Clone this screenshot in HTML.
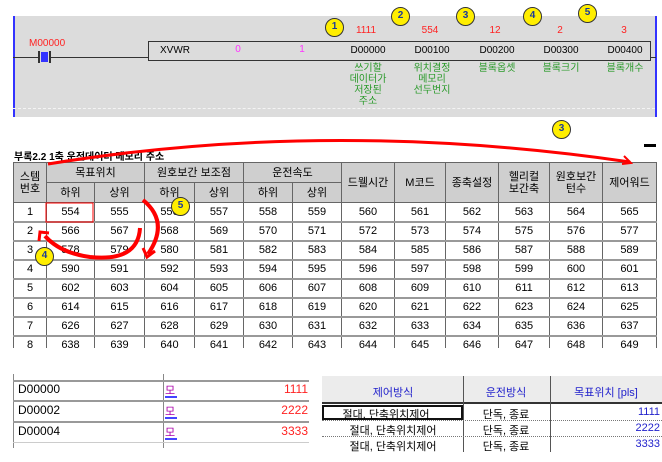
<!DOCTYPE html>
<html><head><meta charset="utf-8"><style>
*{margin:0;padding:0;box-sizing:border-box}
body{width:662px;height:462px;background:#fff;position:relative;overflow:hidden;font-family:"Liberation Sans","Noto Sans CJK KR",sans-serif}
.a{position:absolute;white-space:nowrap}
.c{transform:translateX(-50%);text-align:center}
.ly{font-size:10px;color:#000}
.red{color:#f22}
.grn{color:#2a9a2a;font-size:10px;line-height:11px}
.bub{position:absolute;width:19px;height:19px;border-radius:50%;background:#ffee00;border:1.5px solid #333;font:bold 10px "Liberation Sans",sans-serif;color:#1a3a9a;text-align:center;line-height:16px}
table.t{position:absolute;left:13px;top:162px;border-collapse:collapse;table-layout:fixed;font-size:11px}
table.t td{border:1px solid #666;text-align:center;height:19px;padding:0;border-bottom:2px solid #999}
table.t tr.h td{background:#cfcfcf;border:1px solid #666;height:20px;font-size:11px;line-height:12px}
</style></head><body>
<div class="a" style="left:13px;top:16px;width:644px;height:101px;background:#dcdcdc;border-left:2px solid #33f;border-right:2px solid #33f"></div>
<div class="a" style="left:13px;top:108px;width:642px;border-top:1px dashed #f4f4f4"></div>
<div class="a" style="left:13px;top:57px;width:135px;border-top:1px solid #333"></div>
<div class="a" style="left:651px;top:57px;width:5px;border-top:1px solid #333"></div>
<div class="a" style="left:38px;top:51px;width:13px;height:12px;border-left:2px solid #333;border-right:2px solid #333;background:#dcdcdc"></div>
<div class="a" style="left:41px;top:52px;width:7px;height:10px;background:#33f"></div>
<div class="a red" style="left:29px;top:38px;font-size:10px">M00000</div>
<div class="a" style="left:148px;top:41px;width:503px;height:20px;border:1px solid #333;background:#dcdcdc"></div>
<div class="a ly c" style="left:175px;top:45px">XVWR</div>
<div class="a c" style="left:238px;top:44px;color:#f3f;font-size:10px">0</div>
<div class="a c" style="left:302px;top:44px;color:#f3f;font-size:10px">1</div>
<div class="a ly c" style="left:368px;top:45px">D00000</div>
<div class="a ly c" style="left:432px;top:45px">D00100</div>
<div class="a ly c" style="left:497px;top:45px">D00200</div>
<div class="a ly c" style="left:561px;top:45px">D00300</div>
<div class="a ly c" style="left:625px;top:45px">D00400</div>
<div class="a red c" style="left:366px;top:25px;font-size:10px">1111</div>
<div class="a red c" style="left:430px;top:25px;font-size:10px">554</div>
<div class="a red c" style="left:495px;top:25px;font-size:10px">12</div>
<div class="a red c" style="left:560px;top:25px;font-size:10px">2</div>
<div class="a red c" style="left:624px;top:25px;font-size:10px">3</div>
<div class="a grn c" style="left:368px;top:63px">쓰기할<br>데이터가<br>저장된<br>주소</div>
<div class="a grn c" style="left:432px;top:63px">위치결정<br>메모리<br>선두번지</div>
<div class="a grn c" style="left:497px;top:63px">블록옵셋</div>
<div class="a grn c" style="left:561px;top:63px">블록크기</div>
<div class="a grn c" style="left:625px;top:63px">블록개수</div>
<div class="bub" style="left:325px;top:18px">1</div>
<div class="bub" style="left:391px;top:7px">2</div>
<div class="bub" style="left:456px;top:7px">3</div>
<div class="bub" style="left:523px;top:7px">4</div>
<div class="bub" style="left:578px;top:4px">5</div>

<div class="a" style="left:14px;top:148px;font-size:10px;font-weight:bold">부록2.2 1축 운전데이터 메모리 주소</div>
<div class="a" style="left:644px;top:144px;width:12px;height:3px;background:#000"></div>

<table class="t">
<colgroup><col style="width:33px"><col style="width:48px"><col style="width:50px"><col style="width:50px"><col style="width:49px"><col style="width:49px"><col style="width:49px"><col style="width:53px"><col style="width:51px"><col style="width:53px"><col style="width:51px"><col style="width:53px"><col style="width:54px"></colgroup>
<tr class="h"><td rowspan="2">스템<br>번호</td><td colspan="2">목표위치</td><td colspan="2">원호보간 보조점</td><td colspan="2">운전속도</td><td rowspan="2">드웰시간</td><td rowspan="2">M코드</td><td rowspan="2">종축설정</td><td rowspan="2">헬리컬<br>보간축</td><td rowspan="2">원호보간<br>턴수</td><td rowspan="2">제어워드</td></tr>
<tr class="h"><td>하위</td><td>상위</td><td>하위</td><td>상위</td><td>하위</td><td>상위</td></tr>
<tr><td>1</td><td>554</td><td>555</td><td>556</td><td>557</td><td>558</td><td>559</td><td>560</td><td>561</td><td>562</td><td>563</td><td>564</td><td>565</td></tr>
<tr><td>2</td><td>566</td><td>567</td><td>568</td><td>569</td><td>570</td><td>571</td><td>572</td><td>573</td><td>574</td><td>575</td><td>576</td><td>577</td></tr>
<tr><td>3</td><td>578</td><td>579</td><td>580</td><td>581</td><td>582</td><td>583</td><td>584</td><td>585</td><td>586</td><td>587</td><td>588</td><td>589</td></tr>
<tr><td>4</td><td>590</td><td>591</td><td>592</td><td>593</td><td>594</td><td>595</td><td>596</td><td>597</td><td>598</td><td>599</td><td>600</td><td>601</td></tr>
<tr><td>5</td><td>602</td><td>603</td><td>604</td><td>605</td><td>606</td><td>607</td><td>608</td><td>609</td><td>610</td><td>611</td><td>612</td><td>613</td></tr>
<tr><td>6</td><td>614</td><td>615</td><td>616</td><td>617</td><td>618</td><td>619</td><td>620</td><td>621</td><td>622</td><td>623</td><td>624</td><td>625</td></tr>
<tr><td>7</td><td>626</td><td>627</td><td>628</td><td>629</td><td>630</td><td>631</td><td>632</td><td>633</td><td>634</td><td>635</td><td>636</td><td>637</td></tr>
<tr><td>8</td><td>638</td><td>639</td><td>640</td><td>641</td><td>642</td><td>643</td><td>644</td><td>645</td><td>646</td><td>647</td><td>648</td><td>649</td></tr>
</table>
<div class="a" style="left:0;top:348px;width:662px;height:114px;background:#fff"></div>

<svg class="a" style="left:0;top:0" width="662" height="462">
<path d="M48 164 Q330 118 630 162" stroke="#f00" stroke-width="3" fill="none"/>
<path d="M624 156 L631 163 L622 164" stroke="#f00" stroke-width="2" fill="none"/>
<rect x="46" y="203" width="47" height="19" fill="none" stroke="#f00" stroke-width="1"/>
<path d="M143 200 Q170 222 148 254" stroke="#f00" stroke-width="4" fill="none"/>
<path d="M143 248 L147 257 L155 251" stroke="#f00" stroke-width="3" fill="none"/>
<path d="M140 228 Q138 262 90 257 Q60 253 45 236" stroke="#f00" stroke-width="4" fill="none"/>
<path d="M39 241 L40 232 L49 233" stroke="#f00" stroke-width="3" fill="none"/>
</svg>
<div class="bub" style="left:552px;top:120px">3</div>
<div class="bub" style="left:171px;top:197px">5</div>
<div class="bub" style="left:35px;top:247px">4</div>

<div class="a" style="left:13px;top:374px;width:296px;height:74px;border-left:1px solid #888"></div>
<div class="a" style="left:163px;top:374px;height:74px;border-left:1px solid #888"></div>
<div class="a" style="left:13px;top:380px;width:296px;border-top:2px solid #999"></div>
<div class="a" style="left:13px;top:400px;width:296px;border-top:2px solid #999"></div>
<div class="a" style="left:13px;top:421px;width:296px;border-top:2px solid #999"></div>
<div class="a" style="left:13px;top:442px;width:296px;border-top:1px solid #ccc"></div>
<div class="a" style="left:18px;top:382px;font-size:12px">D00000</div>
<div class="a" style="left:18px;top:403px;font-size:12px">D00002</div>
<div class="a" style="left:18px;top:424px;font-size:12px">D00004</div>
<div class="a" style="left:165px;top:382px;width:12px;height:16px;border-bottom:2px solid #44f;color:#a0a;font-size:11px">모</div>
<div class="a" style="left:165px;top:403px;width:12px;height:16px;border-bottom:2px solid #44f;color:#a0a;font-size:11px">모</div>
<div class="a" style="left:165px;top:424px;width:12px;height:16px;border-bottom:2px solid #44f;color:#a0a;font-size:11px">모</div>
<div class="a red" style="right:354px;top:382px;font-size:12px">1111</div>
<div class="a red" style="right:354px;top:403px;font-size:12px">2222</div>
<div class="a red" style="right:354px;top:424px;font-size:12px">3333</div>

<div class="a" style="left:322px;top:376px;width:340px;height:28px;background:#ececec;border-bottom:2px solid #333"></div>
<div class="a" style="left:463px;top:376px;height:76px;border-left:1px solid #555"></div>
<div class="a" style="left:550px;top:376px;height:76px;border-left:1px solid #555"></div>
<div class="a c" style="left:393px;top:384px;color:#22c;font-size:11px">제어방식</div>
<div class="a c" style="left:506px;top:384px;color:#22c;font-size:11px">운전방식</div>
<div class="a c" style="left:606px;top:384px;color:#22c;font-size:11px">목표위치 [pls]</div>
<div class="a" style="left:322px;top:405px;width:141px;height:15px;border:2px solid #111"></div>
<div class="a" style="left:322px;top:420px;width:340px;border-top:1px dotted #777"></div>
<div class="a" style="left:322px;top:436px;width:340px;border-top:1px dotted #777"></div>
<div class="a c" style="left:386px;top:406px;font-size:11px">절대, 단축위치제어</div>
<div class="a c" style="left:393px;top:422px;font-size:11px">절대, 단축위치제어</div>
<div class="a c" style="left:393px;top:438px;font-size:11px">절대, 단축위치제어</div>
<div class="a c" style="left:506px;top:406px;font-size:11px">단독, 종료</div>
<div class="a c" style="left:506px;top:422px;font-size:11px">단독, 종료</div>
<div class="a c" style="left:506px;top:438px;font-size:11px">단독, 종료</div>
<div class="a" style="right:2px;top:406px;font-size:11px;color:#22c">1111</div>
<div class="a" style="right:2px;top:422px;font-size:11px;color:#22c">2222</div>
<div class="a" style="right:2px;top:438px;font-size:11px;color:#22c">3333</div>
</body></html>
